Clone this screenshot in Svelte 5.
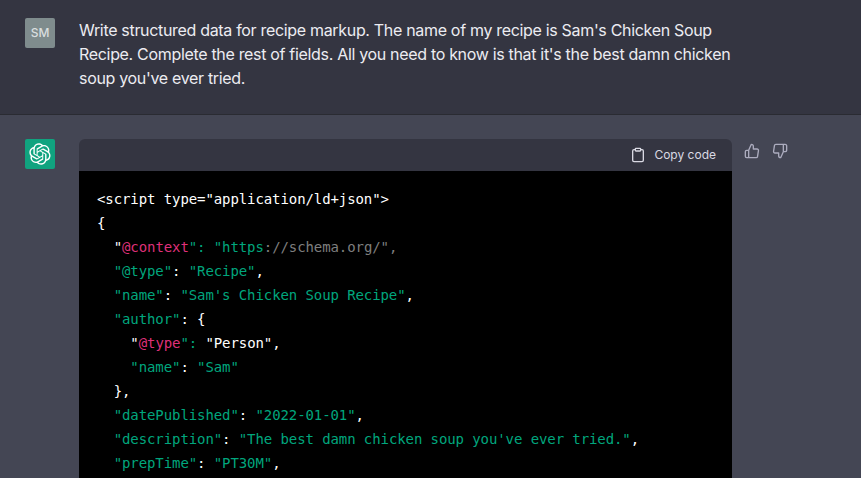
<script>
  const g = 'str', w = 'pun', p = 'key', m = 'url';

  // each line is a list of [class, text] tokens
  const lines = [
    [[w, '<script type="application/ld+json">']],
    [[w, '{']],
    [[w, '  "'], [p, '@context'], [g, '": "https'], [m, '://schema.org/",']],
    [[g, '  "@type"'], [w, ': '], [g, '"Recipe"'], [w, ',']],
    [[g, '  "name"'], [w, ': '], [g, '"Sam\'s Chicken Soup Recipe"'], [w, ',']],
    [[g, '  "author"'], [w, ': {']],
    [[w, '    "'], [p, '@type'], [g, '": '], [w, '"Person",']],
    [[g, '    "name"'], [w, ': '], [g, '"Sam"']],
    [[w, '  },']],
    [[g, '  "datePublished"'], [w, ': '], [g, '"2022-01-01"'], [w, ',']],
    [[g, '  "description"'], [w, ': '], [g, '"The best damn chicken soup you\'ve ever tried."'], [w, ',']],
    [[g, '  "prepTime"'], [w, ': '], [g, '"PT30M"'], [w, ',']]
  ];
</script>

<main class="thread">
  <section class="row user">
    <div class="avatar initials">SM</div>
    <p class="prompt">
      Write structured data for recipe markup. The name of my recipe is Sam's Chicken Soup Recipe. Complete the rest of fields. All you need to know is that it's the best damn chicken soup you've ever tried.
    </p>
  </section>

  <section class="row bot">
    <div class="avatar logo">
      <svg viewBox="0 0 41 41" width="22" height="22" aria-hidden="true">
        <path fill="currentColor" d="M37.5324 16.8707C37.9808 15.5241 38.1363 14.0974 37.9886 12.6859C37.8409 11.2744 37.3934 9.91076 36.676 8.68622C35.6126 6.83404 33.9882 5.3676 32.0373 4.4985C30.0864 3.62941 27.9098 3.40259 25.8215 3.85078C24.8796 2.7893 23.7219 1.94125 22.4257 1.36341C21.1295 0.785575 19.7249 0.491269 18.3058 0.500197C16.1708 0.495044 14.0893 1.16803 12.3614 2.42214C10.6335 3.67624 9.34853 5.44666 8.6917 7.47815C7.30085 7.76286 5.98686 8.3414 4.8377 9.17505C3.68854 10.0087 2.73073 11.0782 2.02839 12.312C0.956464 14.1591 0.498905 16.2988 0.721698 18.4228C0.944492 20.5467 1.83612 22.5449 3.268 24.1293C2.81966 25.4759 2.66413 26.9026 2.81182 28.3141C2.95951 29.7256 3.40701 31.0892 4.12437 32.3138C5.18791 34.1659 6.8123 35.6322 8.76321 36.5013C10.7141 37.3704 12.8907 37.5973 14.9789 37.1492C15.9208 38.2107 17.0786 39.0587 18.3747 39.6366C19.6709 40.2144 21.0755 40.5087 22.4946 40.4998C24.6307 40.5054 26.7133 39.8321 28.4418 38.5772C30.1704 37.3223 31.4556 35.5506 32.1119 33.5179C33.5027 33.2332 34.8167 32.6547 35.9659 31.821C37.115 30.9874 38.0728 29.9178 38.7752 28.684C39.8458 26.8371 40.3023 24.6979 40.0789 22.5748C39.8556 20.4517 38.9639 18.4544 37.5324 16.8707ZM22.4978 37.8849C20.7443 37.8874 19.0459 37.2733 17.6994 36.1501C17.7601 36.117 17.8666 36.0586 17.936 36.0161L25.9004 31.4156C26.1003 31.3019 26.2663 31.137 26.3813 30.9378C26.4964 30.7386 26.5563 30.5124 26.5549 30.2825V19.0542L29.9213 20.998C29.9389 21.0068 29.9541 21.0198 29.9656 21.0359C29.977 21.052 29.9842 21.0707 29.9867 21.0902V30.3889C29.9842 32.375 29.1946 34.2791 27.7909 35.6841C26.3872 37.0892 24.4838 37.8806 22.4978 37.8849ZM6.39227 31.0064C5.51397 29.4888 5.19742 27.7107 5.49804 25.9832C5.55718 26.0187 5.66048 26.0818 5.73461 26.1244L13.699 30.7248C13.8975 30.8408 14.1233 30.902 14.3532 30.902C14.583 30.902 14.8088 30.8408 15.0073 30.7248L24.731 25.1103V28.9979C24.7321 29.0177 24.7283 29.0376 24.7199 29.0556C24.7115 29.0736 24.6988 29.0893 24.6829 29.1012L16.6317 33.7497C14.9096 34.7416 12.8643 35.0097 10.9447 34.4954C9.02506 33.9811 7.38785 32.7263 6.39227 31.0064ZM4.29707 13.6194C5.17156 12.0998 6.55279 10.9364 8.19885 10.3327C8.19885 10.4013 8.19491 10.5228 8.19491 10.6071V19.808C8.19351 20.0378 8.25334 20.2638 8.36823 20.4629C8.48312 20.6619 8.64893 20.8267 8.84863 20.9404L18.5723 26.5542L15.206 28.4979C15.1894 28.5089 15.1703 28.5155 15.1505 28.5173C15.1307 28.5191 15.1107 28.516 15.0924 28.5082L7.04046 23.8557C5.32135 22.8601 4.06716 21.2235 3.55289 19.3046C3.03862 17.3858 3.30624 15.3413 4.29707 13.6194ZM31.955 20.0556L22.2312 14.4411L25.5976 12.4981C25.6142 12.4872 25.6333 12.4805 25.6531 12.4787C25.6729 12.4769 25.6928 12.4801 25.7111 12.4879L33.7631 17.1364C34.9967 17.849 36.0017 18.8982 36.6606 20.1613C37.3194 21.4244 37.6047 22.849 37.4832 24.2684C37.3617 25.6878 36.8382 27.0432 35.9743 28.1759C35.1103 29.3086 33.9415 30.1717 32.6047 30.6641C32.6047 30.5947 32.6047 30.4733 32.6047 30.3889V21.188C32.6066 20.9586 32.5474 20.7328 32.4332 20.5338C32.319 20.3348 32.154 20.1698 31.955 20.0556ZM35.3055 15.0128C35.2464 14.9765 35.1431 14.9142 35.069 14.8717L27.1045 10.2712C26.906 10.1554 26.6803 10.0943 26.4504 10.0943C26.2206 10.0943 25.9948 10.1554 25.7963 10.2712L16.0726 15.8858V11.9982C16.0715 11.9783 16.0753 11.9585 16.0837 11.9405C16.0921 11.9225 16.1048 11.9068 16.1207 11.8949L24.1719 7.25025C25.4053 6.53903 26.8158 6.19376 28.2383 6.25482C29.6608 6.31589 31.0364 6.78077 32.2044 7.59508C33.3723 8.40939 34.2842 9.53945 34.8334 10.8531C35.3826 12.1667 35.5464 13.6095 35.3055 15.0128ZM14.2424 21.9419L10.8752 19.9981C10.8576 19.9893 10.8423 19.9763 10.8309 19.9602C10.8195 19.9441 10.8122 19.9254 10.8098 19.9058V10.6071C10.8107 9.18295 11.2173 7.78848 11.9819 6.58696C12.7466 5.38544 13.8377 4.42659 15.1275 3.82264C16.4173 3.21869 17.8524 2.99464 19.2649 3.1767C20.6775 3.35876 22.0089 3.93941 23.1034 4.85067C23.0427 4.88379 22.937 4.94215 22.8668 4.98473L14.9024 9.58517C14.7025 9.69878 14.5366 9.86356 14.4215 10.0626C14.3065 10.2616 14.2466 10.4877 14.2479 10.7175L14.2424 21.9419ZM16.071 17.9991L20.4018 15.4978L24.7325 17.9975V22.9985L20.4018 25.4983L16.071 22.9985V17.9991Z" />
      </svg>
    </div>

    <div class="code-block">
      <header class="code-head">
        <button class="copy">
          <svg viewBox="0 0 24 24" width="16" height="16" aria-hidden="true">
            <path d="M16 4h2a2 2 0 0 1 2 2v14a2 2 0 0 1-2 2H6a2 2 0 0 1-2-2V6a2 2 0 0 1 2-2h2" />
            <rect x="8" y="2" width="8" height="4" rx="1" ry="1" />
          </svg>
          Copy code
        </button>
      </header>
      <pre class="code">{#each lines as line}<div class="line">{#each line as [cls, text]}<span class={cls}>{text}</span>{/each}</div>{/each}</pre>
    </div>

    <div class="votes">
      <svg viewBox="0 0 24 24" width="16" height="16" aria-hidden="true">
        <path d="M14 9V5a3 3 0 0 0-3-3l-4 9v11h11.28a2 2 0 0 0 2-1.7l1.38-9a2 2 0 0 0-2-2.3zM7 22H4a2 2 0 0 1-2-2v-7a2 2 0 0 1 2-2h3" />
      </svg>
      <svg viewBox="0 0 24 24" width="16" height="16" aria-hidden="true">
        <path d="M10 15v4a3 3 0 0 0 3 3l4-9V2H5.72a2 2 0 0 0-2 1.7l-1.38 9a2 2 0 0 0 2 2.3zm7-13h2.67A2.31 2.31 0 0 1 22 4v7a2.31 2.31 0 0 1-2.33 2H17" />
      </svg>
    </div>
  </section>
</main>

<style>
  :global(body) {
    background: #444654;
    overflow: hidden;
  }

  .thread {
    height: 100vh;
    overflow: hidden;
    font-family: Inter, "Liberation Sans", sans-serif;
    font-size: 16px;
    line-height: 24px;
    color: #ececf1;
  }

  .row {
    display: flex;
    align-items: flex-start;
    padding-left: 25px;
    gap: 24px;
  }

  .user {
    background: #343541;
    border-bottom: 1px solid #2a2b32;
    padding-top: 18px;
    padding-bottom: 24px;
  }

  .bot {
    background: #444654;
    padding-top: 24px;
  }

  .avatar {
    flex: none;
    width: 30px;
    height: 30px;
    border-radius: 2px;
    display: flex;
    align-items: center;
    justify-content: center;
  }

  .initials {
    background: #7f8c8d;
    color: #d9dedf;
    font-size: 12px;
    font-weight: 500;
  }

  .logo {
    background: #10a37f;
    color: #fff;
  }

  .prompt {
    margin: 0;
    width: 653px;
    color: #ececf1;
    letter-spacing: -0.32px;
  }

  .code-block {
    flex: none;
    width: 653px;
    border-radius: 6px 6px 0 0;
    overflow: hidden;
  }

  .code-head {
    height: 32px;
    background: #343541;
    display: flex;
    align-items: center;
    justify-content: flex-end;
    padding-right: 16px;
  }

  .copy {
    display: flex;
    align-items: center;
    gap: 8px;
    padding: 0;
    border: 0;
    background: none;
    color: #d9d9e3;
    font: 12px/16px Inter, "Liberation Sans", sans-serif;
  }

  svg path,
  svg rect {
    fill: none;
    stroke: currentColor;
    stroke-width: 2;
    stroke-linecap: round;
    stroke-linejoin: round;
  }

  .logo svg path {
    fill: currentColor;
    stroke: none;
  }

  .code {
    margin: 0;
    background: #000;
    padding: 16px 18px;
    font-family: "DejaVu Sans Mono", "Liberation Mono", monospace;
    font-size: 14px;
    letter-spacing: -0.09px;
    line-height: 24px;
    height: 400px;
  }

  .line {
    height: 24px;
    white-space: pre;
  }

  .str { color: #00a67d; }
  .pun { color: #fff; }
  .key { color: #df3079; }
  .url { color: #7e7e7e; }

  .votes {
    display: flex;
    gap: 12px;
    margin-left: -12px;
    padding-top: 4px;
    color: #acacbe;
  }
</style>
